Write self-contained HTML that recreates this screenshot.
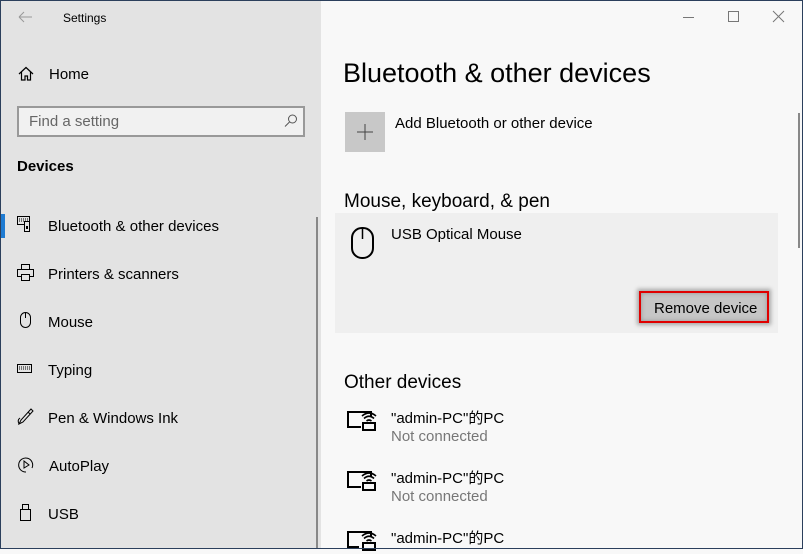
<!DOCTYPE html>
<html><head><meta charset="utf-8"><style>
*{margin:0;padding:0;box-sizing:border-box}
body{width:803px;height:549px;overflow:hidden;font-family:"Liberation Sans","Noto Sans CJK SC",sans-serif;background:#f8f8f8;position:relative;color:#000}
.frame{position:absolute;inset:0;border:1px solid #2b3f5c;pointer-events:none;z-index:10}
.side{position:absolute;left:0;top:0;width:321px;height:549px;background:#e3e3e3}
.t{position:absolute;white-space:nowrap;margin-top:1px}
.nav{font-size:15px;color:#000}
svg{position:absolute;overflow:visible}
</style></head><body>
<div class="side"></div>
<svg style="left:18px;top:11px" width="14" height="12"><path d="M1 6H14M1 6L6 1M1 6L6 11" stroke="#999" fill="none" stroke-width="1"/></svg>
<div class="t" style="left:63px;top:10px;font-size:12px">Settings</div>
<svg style="left:18px;top:66px" width="16" height="15"><path d="M1 8L8 1.5L15 8M3.5 6V14H7V10H9.5V14H12.5V6" stroke="#000" fill="none" stroke-width="1.2"/></svg>
<div class="t nav" style="left:49px;top:65px">Home</div>
<div style="position:absolute;left:17px;top:106px;width:288px;height:31px;border:2px solid #999;background:#f1f1f1"></div>
<div class="t" style="left:29px;top:112px;font-size:15px;color:#666">Find a setting</div>
<svg style="left:284px;top:114px" width="14" height="14"><circle cx="8.5" cy="5" r="4" stroke="#555" fill="none"/><path d="M5.5 8L1 12.5" stroke="#555"/></svg>
<div class="t" style="left:17px;top:157px;font-size:15px;font-weight:bold">Devices</div>
<div style="position:absolute;left:0;top:214px;width:5px;height:24px;background:#1e7bd2"></div>
<svg style="left:17px;top:216px" width="18" height="18"><rect x="0.5" y="0.5" width="12" height="8" fill="none" stroke="#000"/><path d="M2 3h9M2 5h9" stroke="#000" stroke-dasharray="1 1"/><rect x="7.5" y="5.5" width="5" height="10" fill="#e3e3e3" stroke="#000"/><rect x="9" y="10" width="2" height="3" fill="#000"/></svg>
<div class="t nav" style="left:48px;top:217px">Bluetooth &amp; other devices</div>
<svg style="left:17px;top:264px" width="18" height="18"><rect x="4.5" y="0.5" width="8" height="5" fill="none" stroke="#000"/><rect x="0.5" y="5.5" width="16" height="7" fill="none" stroke="#000"/><rect x="4.5" y="10.5" width="8" height="6" fill="#e3e3e3" stroke="#000"/></svg>
<div class="t nav" style="left:48px;top:265px">Printers &amp; scanners</div>
<svg style="left:20px;top:312px" width="12" height="17"><rect x="0.5" y="0.5" width="10" height="15" rx="5" fill="none" stroke="#000"/><path d="M5.5 1V6" stroke="#000"/></svg>
<div class="t nav" style="left:48px;top:313px">Mouse</div>
<svg style="left:17px;top:364px" width="16" height="10"><rect x="0.5" y="0.5" width="14" height="8" fill="none" stroke="#000"/><path d="M2 3h11M2 5h11" stroke="#000" stroke-dasharray="1 1"/></svg>
<div class="t nav" style="left:48px;top:361px">Typing</div>
<svg style="left:17px;top:408px" width="18" height="18"><path d="M14 1L4 12L2 16L6 14L16 3ZM11 4L13 6M2 16Q0 12 3 10" stroke="#000" fill="none"/></svg>
<div class="t nav" style="left:48px;top:409px">Pen &amp; Windows Ink</div>
<svg style="left:17px;top:456px" width="18" height="18"><path d="M9 16A7 7 0 1 1 15 12" stroke="#000" fill="none"/><path d="M7 5L12 9L7 12Z" stroke="#000" fill="none"/></svg>
<div class="t nav" style="left:49px;top:457px">AutoPlay</div>
<svg style="left:20px;top:504px" width="12" height="18"><rect x="2.5" y="0.5" width="6" height="5" fill="none" stroke="#000"/><rect x="0.5" y="5.5" width="10" height="11" fill="none" stroke="#000"/></svg>
<div class="t nav" style="left:48px;top:505px">USB</div>
<div style="position:absolute;left:316px;top:217px;width:2px;height:332px;background:#888"></div>

<svg style="left:683px;top:17px" width="12" height="1"><path d="M0 .5H11" stroke="#777"/></svg>
<svg style="left:728px;top:11px" width="12" height="12"><rect x=".5" y=".5" width="10" height="10" fill="none" stroke="#777"/></svg>
<svg style="left:773px;top:11px" width="12" height="12"><path d="M0 0L11 11M11 0L0 11" stroke="#777"/></svg>
<div style="position:absolute;left:798px;top:113px;width:2px;height:135px;background:#888"></div>

<div class="t" style="left:343px;top:57px;font-size:27px;color:#000">Bluetooth &amp; other devices</div>
<div style="position:absolute;left:345px;top:112px;width:40px;height:40px;background:#c8c8c8"></div>
<svg style="left:356px;top:123px" width="18" height="18"><path d="M9 1V17M1 9H17" stroke="#444"/></svg>
<div class="t" style="left:395px;top:114px;font-size:15px">Add Bluetooth or other device</div>
<div class="t" style="left:344px;top:190px;font-size:19px">Mouse, keyboard, &amp; pen</div>
<div style="position:absolute;left:335px;top:213px;width:443px;height:120px;background:#efefef"></div>
<svg style="left:351px;top:227px" width="24" height="32"><rect x="1" y="1" width="21" height="30" rx="10" fill="none" stroke="#000" stroke-width="2"/><path d="M11.5 1V12" stroke="#000" stroke-width="1.5"/></svg>
<div class="t" style="left:391px;top:225px;font-size:15px">USB Optical Mouse</div>
<div style="position:absolute;left:639px;top:291px;width:130px;height:32px;border:2px solid #e00000;background:#c6c6c6;box-shadow:0 0 4px 2px rgba(0,0,0,.3),inset 0 0 5px rgba(0,0,0,.25)"></div>
<div class="t" style="left:654px;top:299px;font-size:15px">Remove device</div>
<div class="t" style="left:344px;top:371px;font-size:19px">Other devices</div>

<svg style="left:347px;top:410px" width="34" height="24"><path d="M12 17H1V2H24V7" stroke="#000" stroke-width="2" fill="none"/><rect x="11" y="16" width="3" height="2" fill="#000"/><rect x="16" y="13" width="12" height="7" fill="none" stroke="#000" stroke-width="2"/><path d="M15 6Q22 0 29 6M17 8.5Q22 4 27 8.5M19.5 11Q22 9 24.5 11" stroke="#000" stroke-width="1.6" fill="none"/></svg>
<div class="t" style="left:391px;top:406px;font-size:15px">"admin-PC"的PC</div>
<div class="t" style="left:391px;top:427px;font-size:15px;color:#777">Not connected</div>
<svg style="left:347px;top:470px" width="34" height="24"><path d="M12 17H1V2H24V7" stroke="#000" stroke-width="2" fill="none"/><rect x="11" y="16" width="3" height="2" fill="#000"/><rect x="16" y="13" width="12" height="7" fill="none" stroke="#000" stroke-width="2"/><path d="M15 6Q22 0 29 6M17 8.5Q22 4 27 8.5M19.5 11Q22 9 24.5 11" stroke="#000" stroke-width="1.6" fill="none"/></svg>
<div class="t" style="left:391px;top:466px;font-size:15px">"admin-PC"的PC</div>
<div class="t" style="left:391px;top:487px;font-size:15px;color:#777">Not connected</div>
<svg style="left:347px;top:530px" width="34" height="24"><path d="M12 17H1V2H24V7" stroke="#000" stroke-width="2" fill="none"/><rect x="16" y="13" width="12" height="7" fill="none" stroke="#000" stroke-width="2"/><path d="M15 6Q22 0 29 6M17 8.5Q22 4 27 8.5M19.5 11Q22 9 24.5 11" stroke="#000" stroke-width="1.6" fill="none"/></svg>
<div class="t" style="left:391px;top:526px;font-size:15px">"admin-PC"的PC</div>
<div class="frame"></div>
</body></html>
